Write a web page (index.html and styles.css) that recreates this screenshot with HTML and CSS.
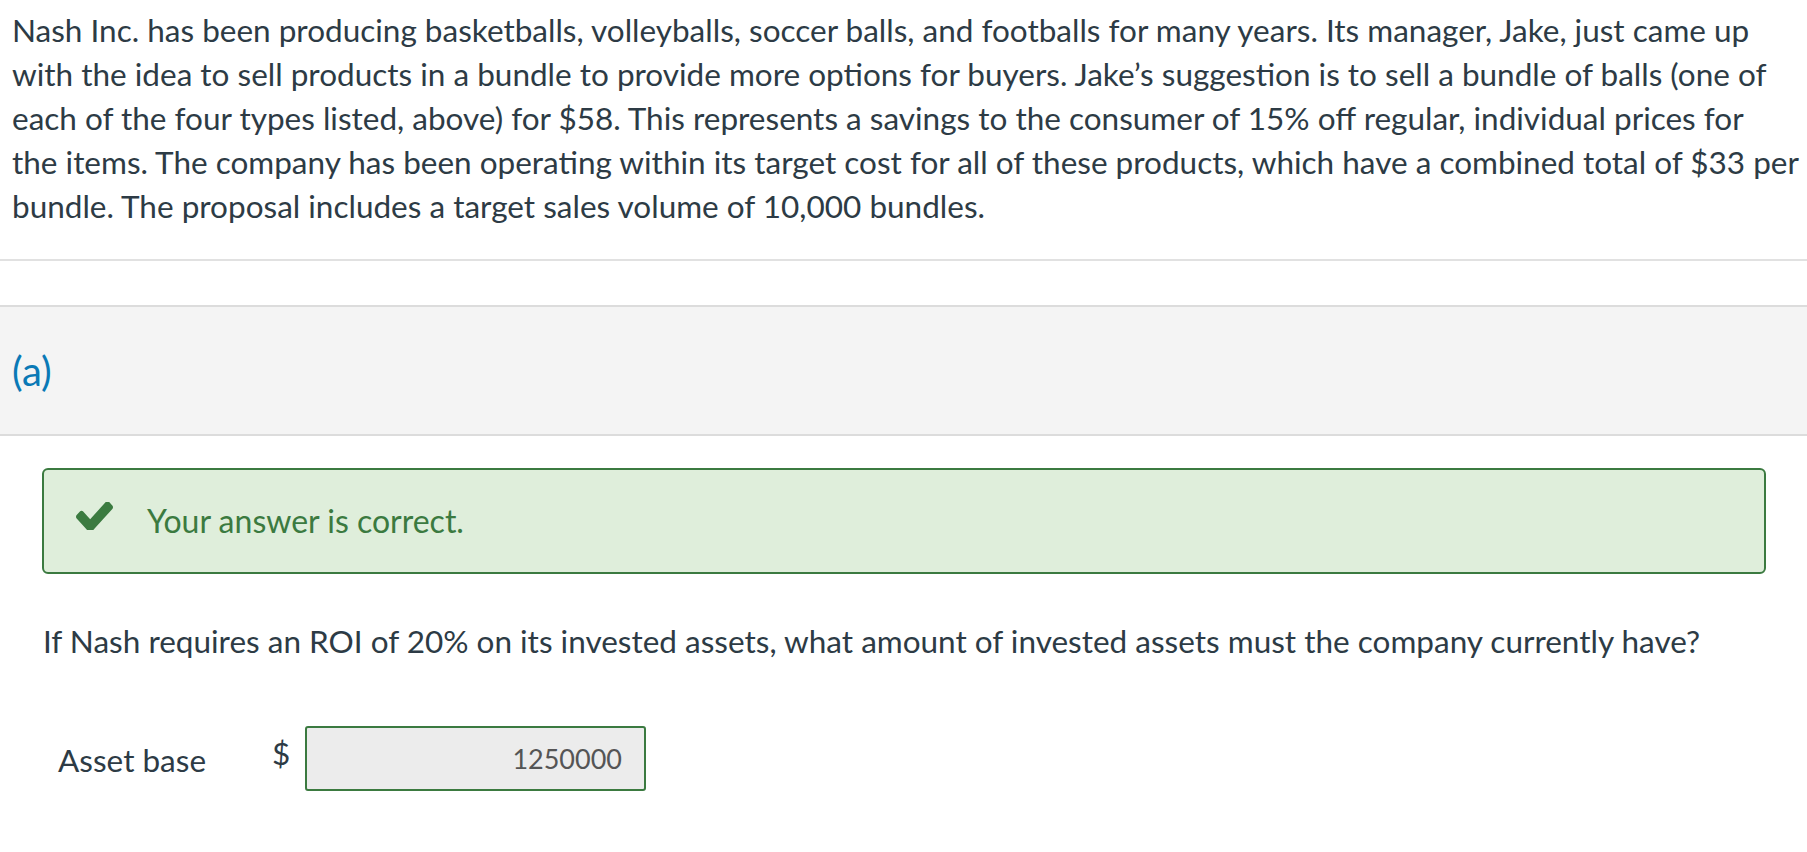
FILE: index.html
```html
<!DOCTYPE html>
<html lang="en">
<head>
<meta charset="utf-8">
<title>Question</title>
<link rel="stylesheet" href="styles.css">
</head>
<body>
<div class="stem">
  <p>Nash Inc. has been producing basketballs, volleyballs, soccer balls, and footballs for many years. Its manager, Jake, just came up<br>with the idea to sell products in a bundle to provide more options for buyers. Jake’s suggestion is to sell a bundle of balls (one of<br>each of the four types listed, above) for $58. This represents a savings to the consumer of 15% off regular, individual prices for<br>the items. The company has been operating within its target cost for all of these products, which have a combined total of $33 per<br>bundle. The proposal includes a target sales volume of 10,000 bundles.</p>
</div>
<div class="spacer"></div>
<div class="part-header"><span class="part-label">(a)</span></div>
<div class="part-body">
  <div class="feedback">
    <svg class="check" width="37" height="28" viewBox="121 366 1550 1064" preserveAspectRatio="none" aria-hidden="true"><path fill="#3b7b40" d="M1671 566q0 40-28 68l-724 724-136 136q-28 28-68 28t-68-28l-136-136-362-362q-28-28-28-68t28-68l136-136q28-28 68-28t68 28l294 295 656-657q28-28 68-28t68 28l136 136q28 28 28 68z"/></svg>
    <span class="feedback-text">Your answer is correct.</span>
  </div>
  <p class="question">If Nash requires an ROI of 20% on its invested assets, what amount of invested assets must the company currently have?</p>
  <div class="answer-row">
    <span class="answer-label">Asset base</span>
    <span class="currency">$</span>
    <div class="answer-input">1250000</div>
  </div>
</div>
</body>
</html>
```
FILE: styles.css
```css
html, body {
  margin: 0;
  padding: 0;
  background: #ffffff;
}
body {
  font-family: Lato, "Open Sans", "Liberation Sans", sans-serif;
  color: #2d3b45;
  font-size: 31.5px;
  line-height: 44px;
}
p {
  margin: 0;
}
.stem {
  padding: 8px 2px 31px 12px;
  border-bottom: 2px solid #e1e1e1;
}
.stem p {
  white-space: nowrap;
}
.spacer {
  height: 44px;
}
.part-header {
  background: #f4f4f4;
  border-top: 2px solid #dcdcdc;
  border-bottom: 2px solid #dcdcdc;
  height: 127px;
  display: flex;
  align-items: center;
  padding-left: 12px;
}
.part-label {
  color: #0a79b6;
  font-size: 40px;
  line-height: 44px;
}
.part-body {
  padding: 32px 41px 40px 42px;
}
.feedback {
  height: 102px;
  border: 2px solid #3b7a40;
  border-radius: 6px;
  background: #dfeedb;
  display: flex;
  align-items: center;
  padding-left: 32px;
}
.check {
  margin-top: -10px;
  flex: none;
}
.feedback-text {
  color: #3b7a40;
  font-size: 32px;
  margin-left: 34px;
}
.question {
  margin-top: 45px;
  padding-left: 1px;
}
.answer-row {
  margin-top: 63px;
  display: flex;
  align-items: center;
  padding-left: 16px;
}
.answer-label {
  width: 214px;
  padding-top: 3px;
}
.currency {
  width: 33px;
  margin-top: -12px;
}
.answer-input {
  box-sizing: border-box;
  width: 341px;
  height: 65px;
  border: 2px solid #3b7a40;
  border-radius: 3px;
  background: #ececec;
  color: #555555;
  font-size: 27px;
  text-align: right;
  padding-right: 22px;
  line-height: 61px;
}
```
